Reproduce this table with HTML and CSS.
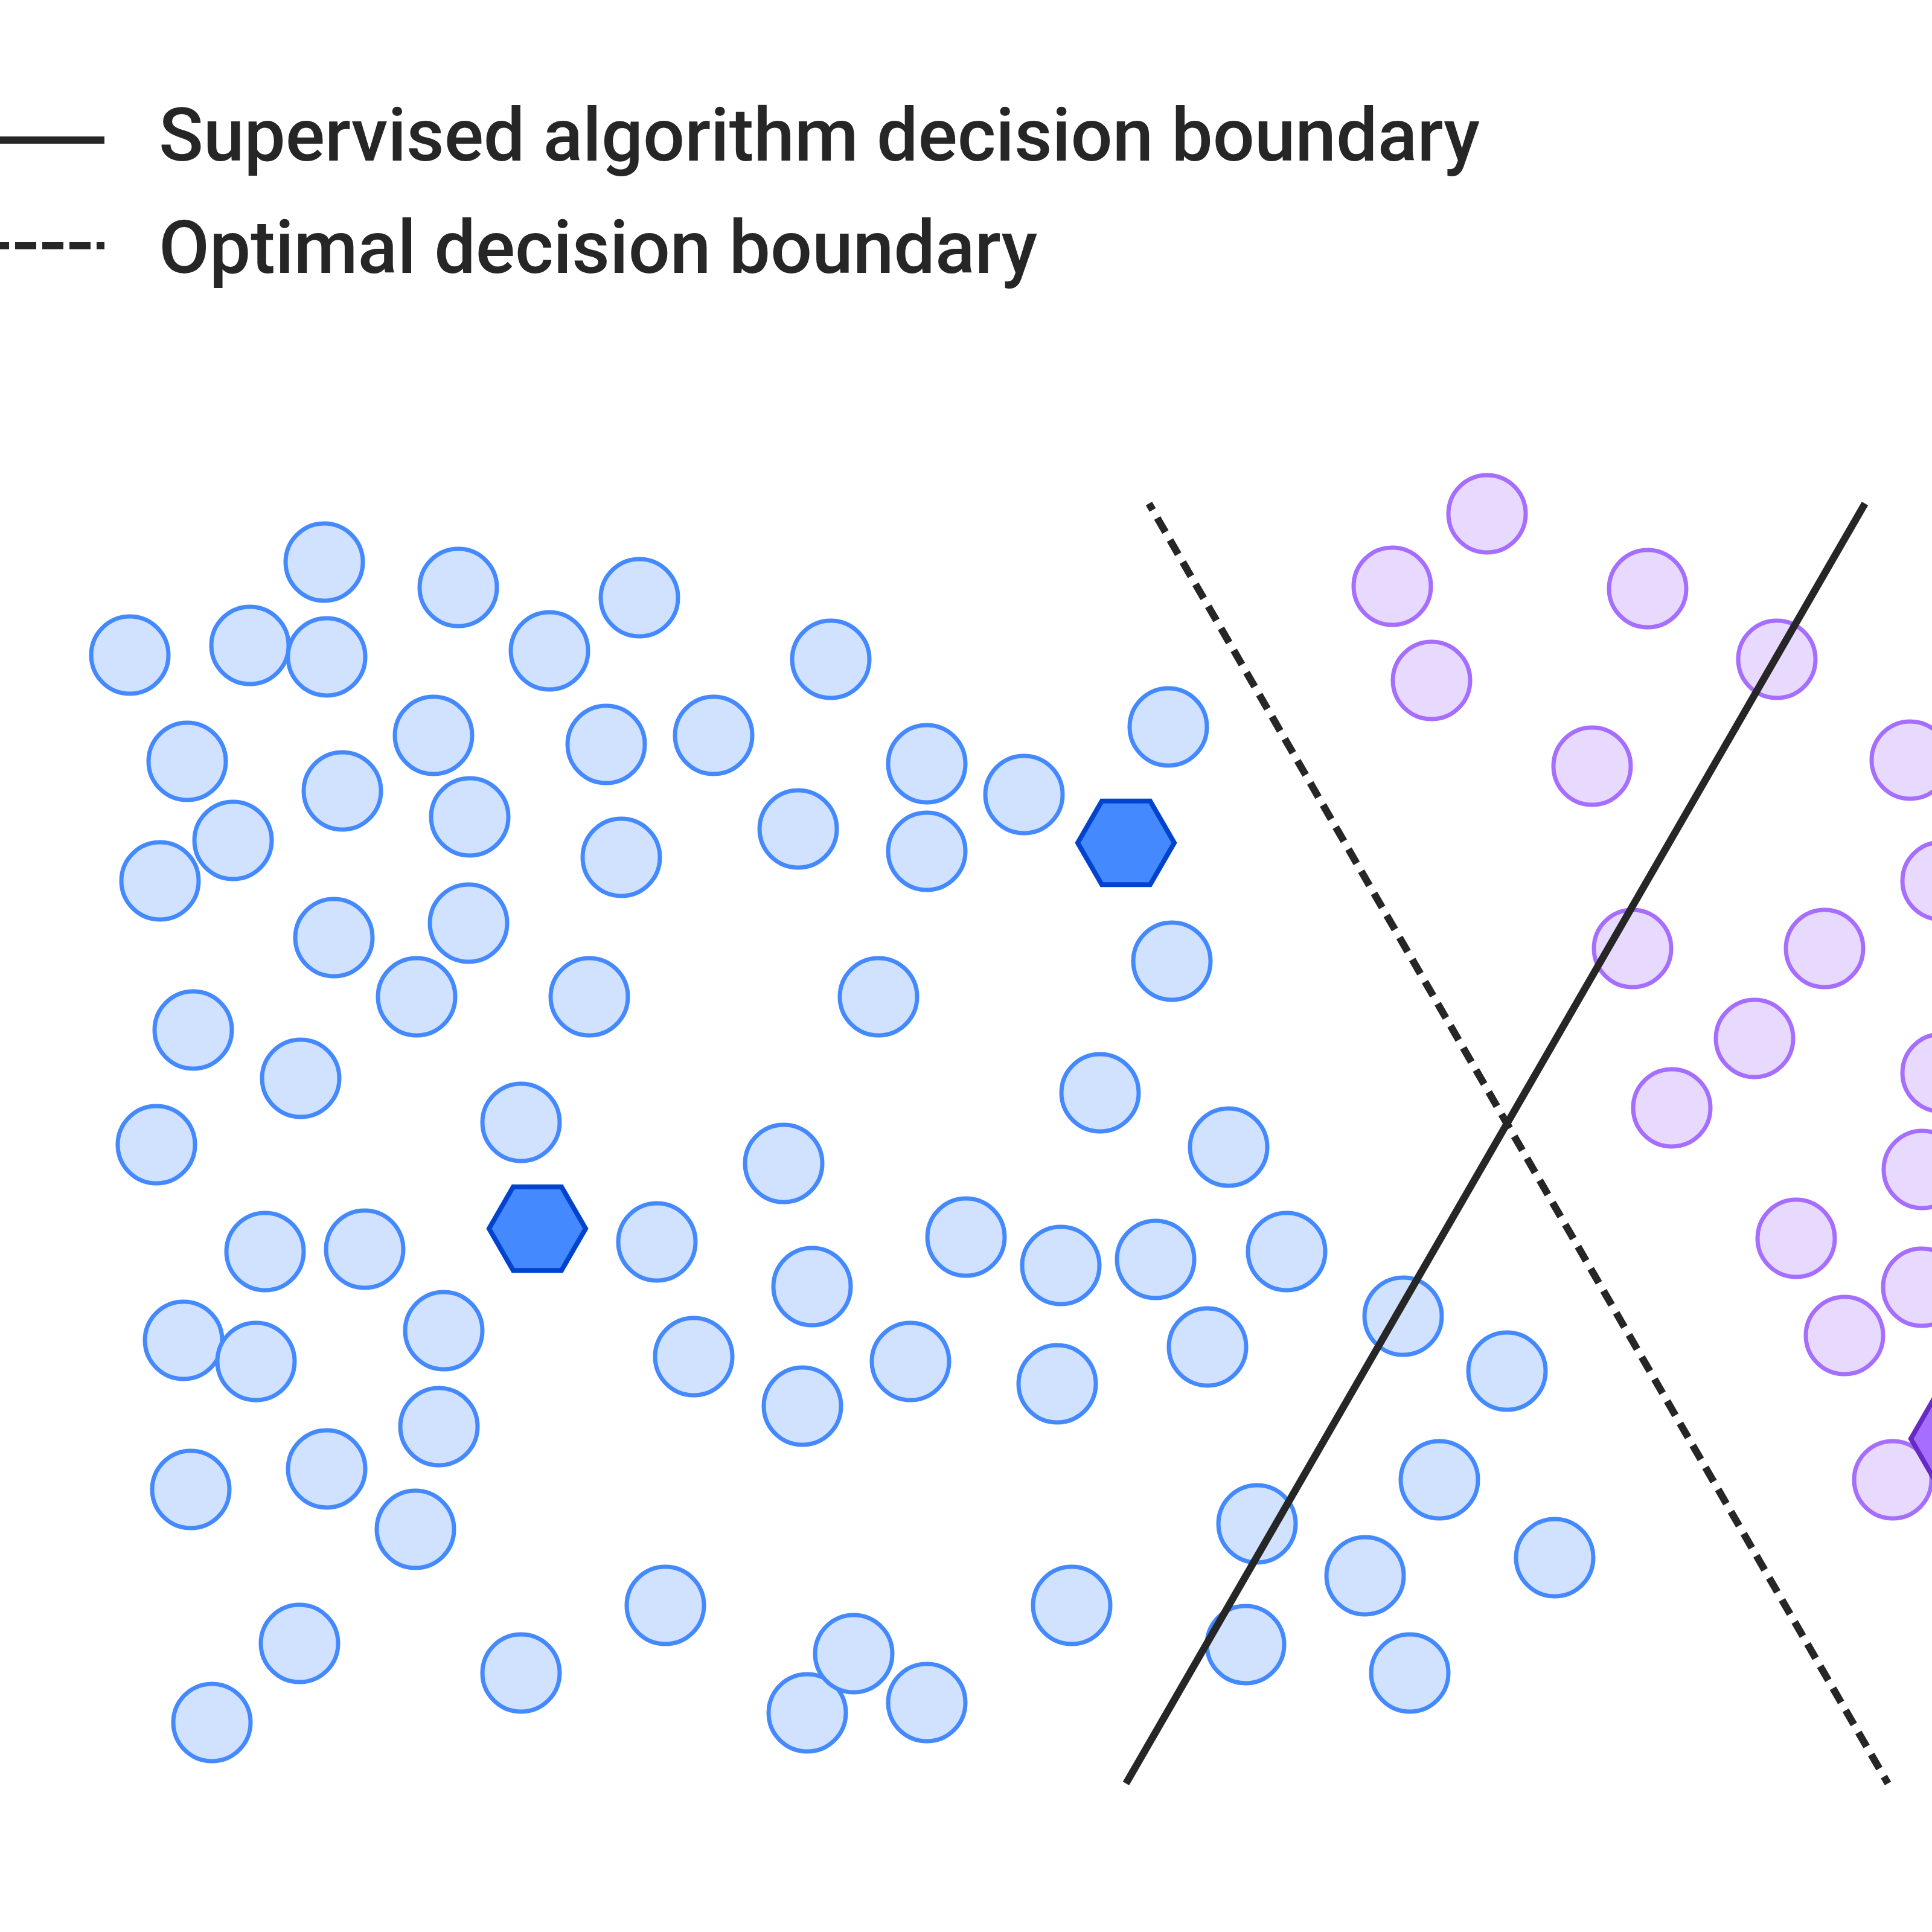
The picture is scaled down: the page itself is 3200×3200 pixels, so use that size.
FILE: index.html
```html
<!DOCTYPE html>
<html lang="en">
<head>
<meta charset="utf-8">
<title>Decision boundaries</title>
<link rel="stylesheet" href="styles.css">
</head>
<body>
<div class="page">
  <div class="legend">
    <div class="legend-row">
      <svg class="legend-swatch swatch-solid" width="173" height="12" viewBox="0 0 173 12"><line class="boundary" x1="0" y1="6" x2="173" y2="6"/></svg>
      <span class="legend-label">Supervised algorithm decision boundary</span>
    </div>
    <div class="legend-row">
      <svg class="legend-swatch swatch-dashed" width="173" height="12" viewBox="0 0 173 12"><line class="boundary legend-dash" x1="0" y1="6" x2="173" y2="6"/></svg>
      <span class="legend-label">Optimal decision boundary</span>
    </div>
  </div>
  <svg class="plot" width="3200" height="2650" viewBox="0 550 3200 2650">
    <g class="pt-blue">
      <circle cx="537" cy="931" r="64"/>
      <circle cx="759" cy="973" r="64"/>
      <circle cx="1059" cy="990" r="64"/>
      <circle cx="215" cy="1085" r="64"/>
      <circle cx="414" cy="1069" r="64"/>
      <circle cx="541" cy="1088" r="64"/>
      <circle cx="910" cy="1078" r="64"/>
      <circle cx="1376" cy="1092" r="64"/>
      <circle cx="310" cy="1261" r="64"/>
      <circle cx="718" cy="1218" r="64"/>
      <circle cx="1004" cy="1233" r="64"/>
      <circle cx="1182" cy="1218" r="64"/>
      <circle cx="567" cy="1310" r="64"/>
      <circle cx="1535" cy="1265" r="64"/>
      <circle cx="1696" cy="1316" r="64"/>
      <circle cx="1935" cy="1204" r="64"/>
      <circle cx="386" cy="1392" r="64"/>
      <circle cx="778" cy="1353" r="64"/>
      <circle cx="265" cy="1459" r="64"/>
      <circle cx="1029" cy="1420" r="64"/>
      <circle cx="1322" cy="1373" r="64"/>
      <circle cx="1535" cy="1410" r="64"/>
      <circle cx="553" cy="1553" r="64"/>
      <circle cx="776" cy="1529" r="64"/>
      <circle cx="690" cy="1651" r="64"/>
      <circle cx="976" cy="1651" r="64"/>
      <circle cx="1455" cy="1651" r="64"/>
      <circle cx="1941" cy="1592" r="64"/>
      <circle cx="320" cy="1706" r="64"/>
      <circle cx="498" cy="1786" r="64"/>
      <circle cx="1822" cy="1810" r="64"/>
      <circle cx="259" cy="1896" r="64"/>
      <circle cx="863" cy="1859" r="64"/>
      <circle cx="1298" cy="1927" r="64"/>
      <circle cx="2035" cy="1900" r="64"/>
      <circle cx="439" cy="2073" r="64"/>
      <circle cx="604" cy="2069" r="64"/>
      <circle cx="1088" cy="2057" r="64"/>
      <circle cx="1600" cy="2049" r="64"/>
      <circle cx="1757" cy="2096" r="64"/>
      <circle cx="1914" cy="2086" r="64"/>
      <circle cx="2131" cy="2073" r="64"/>
      <circle cx="304" cy="2220" r="64"/>
      <circle cx="424" cy="2255" r="64"/>
      <circle cx="735" cy="2204" r="64"/>
      <circle cx="1345" cy="2131" r="64"/>
      <circle cx="1149" cy="2247" r="64"/>
      <circle cx="1508" cy="2255" r="64"/>
      <circle cx="1329" cy="2329" r="64"/>
      <circle cx="1751" cy="2292" r="64"/>
      <circle cx="2000" cy="2231" r="64"/>
      <circle cx="2324" cy="2180" r="64"/>
      <circle cx="2496" cy="2271" r="64"/>
      <circle cx="727" cy="2363" r="64"/>
      <circle cx="316" cy="2467" r="64"/>
      <circle cx="541" cy="2433" r="64"/>
      <circle cx="688" cy="2533" r="64"/>
      <circle cx="2384" cy="2451" r="64"/>
      <circle cx="2082" cy="2524" r="64"/>
      <circle cx="2261" cy="2610" r="64"/>
      <circle cx="2575" cy="2580" r="64"/>
      <circle cx="496" cy="2722" r="64"/>
      <circle cx="1102" cy="2659" r="64"/>
      <circle cx="1775" cy="2659" r="64"/>
      <circle cx="863" cy="2771" r="64"/>
      <circle cx="2063" cy="2724" r="64"/>
      <circle cx="2335" cy="2771" r="64"/>
      <circle cx="351" cy="2853" r="64"/>
      <circle cx="1337" cy="2837" r="64"/>
      <circle cx="1414" cy="2739" r="64"/>
      <circle cx="1535" cy="2820" r="64"/>
    </g>
    <g class="hex-blue">
      <polygon points="1785,1396 1825,1326.7 1905,1326.7 1945,1396 1905,1465.3 1825,1465.3"/>
      <polygon points="810,2035 850,1965.7 930,1965.7 970,2035 930,2104.3 850,2104.3"/>
    </g>
    <g class="pt-purple">
      <circle cx="2463" cy="851" r="64"/>
      <circle cx="2306" cy="971" r="64"/>
      <circle cx="2729" cy="975" r="64"/>
      <circle cx="2371" cy="1127" r="64"/>
      <circle cx="2943" cy="1092" r="64"/>
      <circle cx="2637" cy="1269" r="64"/>
      <circle cx="3164" cy="1259" r="64"/>
      <circle cx="3215" cy="1459" r="64"/>
      <circle cx="2704" cy="1571" r="64"/>
      <circle cx="3022" cy="1571" r="64"/>
      <circle cx="2906" cy="1720" r="64"/>
      <circle cx="2769" cy="1835" r="64"/>
      <circle cx="3215" cy="1777" r="64"/>
      <circle cx="3184" cy="1937" r="64"/>
      <circle cx="2975" cy="2051" r="64"/>
      <circle cx="3183" cy="2132" r="64"/>
      <circle cx="3055" cy="2212" r="64"/>
      <circle cx="3135" cy="2451" r="64"/>
    </g>
    <g class="hex-purple">
      <polygon points="3165,2383 3205,2313.7 3285,2313.7 3325,2383 3285,2452.3 3205,2452.3"/>
    </g>
    <line class="boundary" x1="1865" y1="2954" x2="3089" y2="834"/>
    <line class="boundary plot-dash" x1="1903" y1="834" x2="3127" y2="2954"/>
  </svg>
</div>
</body>
</html>
```

FILE: styles.css
```css
html, body {
  margin: 0;
  padding: 0;
  background: #ffffff;
}

.page {
  width: 3200px;
  height: 3200px;
  overflow: hidden;
  display: flex;
  flex-direction: column;
}

.legend {
  display: flex;
  flex-direction: column;
  padding-top: 132px;
  height: 550px;
  box-sizing: border-box;
}

.legend-row {
  display: flex;
  align-items: flex-start;
  gap: 90px;
  height: 186px;
}

.legend-swatch {
  display: block;
  flex: none;
}

.swatch-solid {
  margin-top: 94px;
}

.swatch-dashed {
  margin-top: 83px;
}

.legend-label {
  font-family: Roboto, "Liberation Sans", sans-serif;
  font-size: 122px;
  font-weight: 500;
  line-height: 186px;
  letter-spacing: -0.2px;
  color: #262626;
  white-space: nowrap;
}

.plot {
  display: block;
  flex: none;
}

.boundary {
  stroke: #262626;
  stroke-width: 12;
  fill: none;
}

.legend-dash {
  stroke-dasharray: 35 10;
  stroke-dashoffset: 20;
}

.plot-dash {
  stroke-dasharray: 27 15.23;
  stroke-dashoffset: 14.6;
}

.pt-blue circle {
  fill: #d0e2ff;
  stroke: #4589ff;
  stroke-width: 7;
}

.hex-blue polygon {
  fill: #4589ff;
  stroke: #0043ce;
  stroke-width: 8;
}

.pt-purple circle {
  fill: #e8daff;
  stroke: #a56eff;
  stroke-width: 7;
}

.hex-purple polygon {
  fill: #a56eff;
  stroke: #6929c4;
  stroke-width: 8;
}
```
